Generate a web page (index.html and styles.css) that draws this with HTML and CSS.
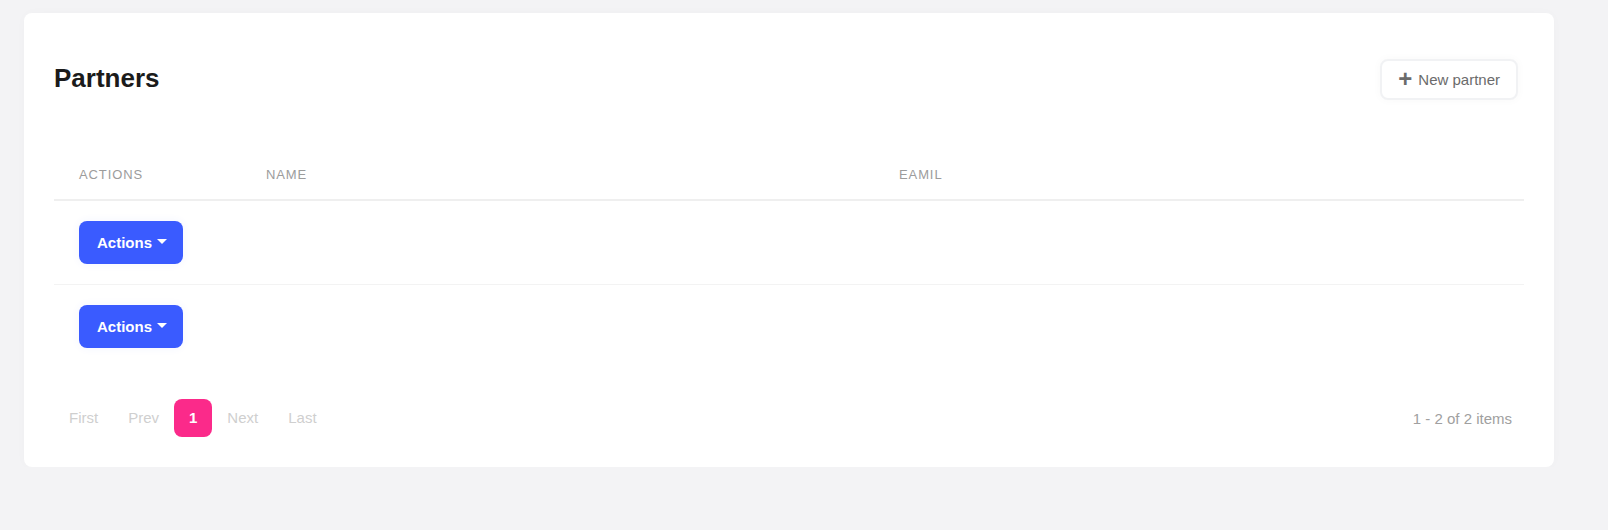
FILE: index.html
```html
<!DOCTYPE html>
<html>
<head>
  <meta charset="UTF-8">
  <link rel="stylesheet" href="styles.css">
  <title>Partners</title>
</head>
<body>
  <div class="card">
    <div class="card-header">
      <h1>Partners</h1>
      <button class="btn-new"><span class="plus">+</span> New partner</button>
    </div>

    <table class="grid">
      <thead>
        <tr>
          <th class="col-actions">Actions</th>
          <th class="col-name">Name</th>
          <th>Eamil</th>
        </tr>
      </thead>
      <tbody>
        <tr>
          <td><button class="btn-actions">Actions<span class="caret"></span></button></td>
          <td></td>
          <td></td>
        </tr>
        <tr>
          <td><button class="btn-actions">Actions<span class="caret"></span></button></td>
          <td></td>
          <td></td>
        </tr>
      </tbody>
    </table>

    <div class="pager">
      <div class="pages">
        <a class="page">First</a>
        <a class="page">Prev</a>
        <a class="page active">1</a>
        <a class="page">Next</a>
        <a class="page">Last</a>
      </div>
      <div class="summary">1 - 2 of 2 items</div>
    </div>
  </div>
</body>
</html>
```

FILE: styles.css
```css
* {
  margin: 0;
  padding: 0;
  box-sizing: border-box;
}

body {
  background: #f3f3f5;
  font-family: "Liberation Sans", Arial, sans-serif;
  padding: 13px 54px 0 24px;
}

.card {
  background: #fff;
  border-radius: 8px;
  box-shadow: 0 0 12px rgba(0, 0, 0, 0.02);
  padding: 46px 30px 30px;
}

.card-header {
  display: flex;
  justify-content: space-between;
  align-items: center;
  padding-right: 6px;
  margin-bottom: 48px;
}

h1 {
  font-size: 26px;
  font-weight: bold;
  color: #1b1b1b;
  margin-bottom: 2px;
}

.btn-new {
  display: flex;
  align-items: center;
  gap: 6px;
  height: 41px;
  padding: 0 16px;
  background: #fff;
  border: 2px solid #f1f2f4;
  border-radius: 8px;
  box-shadow: 0 0 10px rgba(0, 0, 0, 0.03);
  font-family: inherit;
  font-size: 15px;
  color: #6b6b6b;
}

.btn-new .plus {
  font-size: 24px;
  font-weight: bold;
  line-height: 1;
  margin-top: -2px;
}

.grid {
  width: 100%;
  border-collapse: collapse;
}

.grid th {
  text-align: left;
  font-size: 13px;
  font-weight: normal;
  letter-spacing: 0.9px;
  text-transform: uppercase;
  color: #9c9c9c;
  padding: 19px 25px 17px;
  border-bottom: 2px solid #efefef;
}

.col-actions {
  width: 187px;
}

.col-name {
  width: 633px;
}

.grid td {
  padding: 20px 25px;
  border-bottom: 1px solid #f3f3f3;
}

.grid tbody tr:last-child td {
  border-bottom: none;
}

.btn-actions {
  display: flex;
  align-items: center;
  height: 43px;
  padding: 0 16px 0 18px;
  background: #3a5bff;
  color: #fff;
  border: none;
  border-radius: 8px;
  box-shadow: 0 0 10px rgba(58, 91, 255, 0.06);
  font-family: inherit;
  font-size: 15px;
  font-weight: bold;
}

.caret {
  display: inline-block;
  margin-left: 5px;
  margin-top: -3px;
  border-top: 5px solid #fff;
  border-left: 5px solid transparent;
  border-right: 5px solid transparent;
}

.pager {
  display: flex;
  justify-content: space-between;
  align-items: center;
  margin-top: 31px;
}

.pages {
  display: flex;
  align-items: center;
}

.page {
  height: 38px;
  line-height: 38px;
  padding: 0 15px;
  font-size: 15px;
  color: #cfcfcf;
  border-radius: 8px;
}

.page.active {
  background: #fb2a8a;
  color: #fff;
  font-weight: bold;
}

.summary {
  font-size: 15px;
  color: #a0a0a0;
  padding-right: 12px;
}
```
